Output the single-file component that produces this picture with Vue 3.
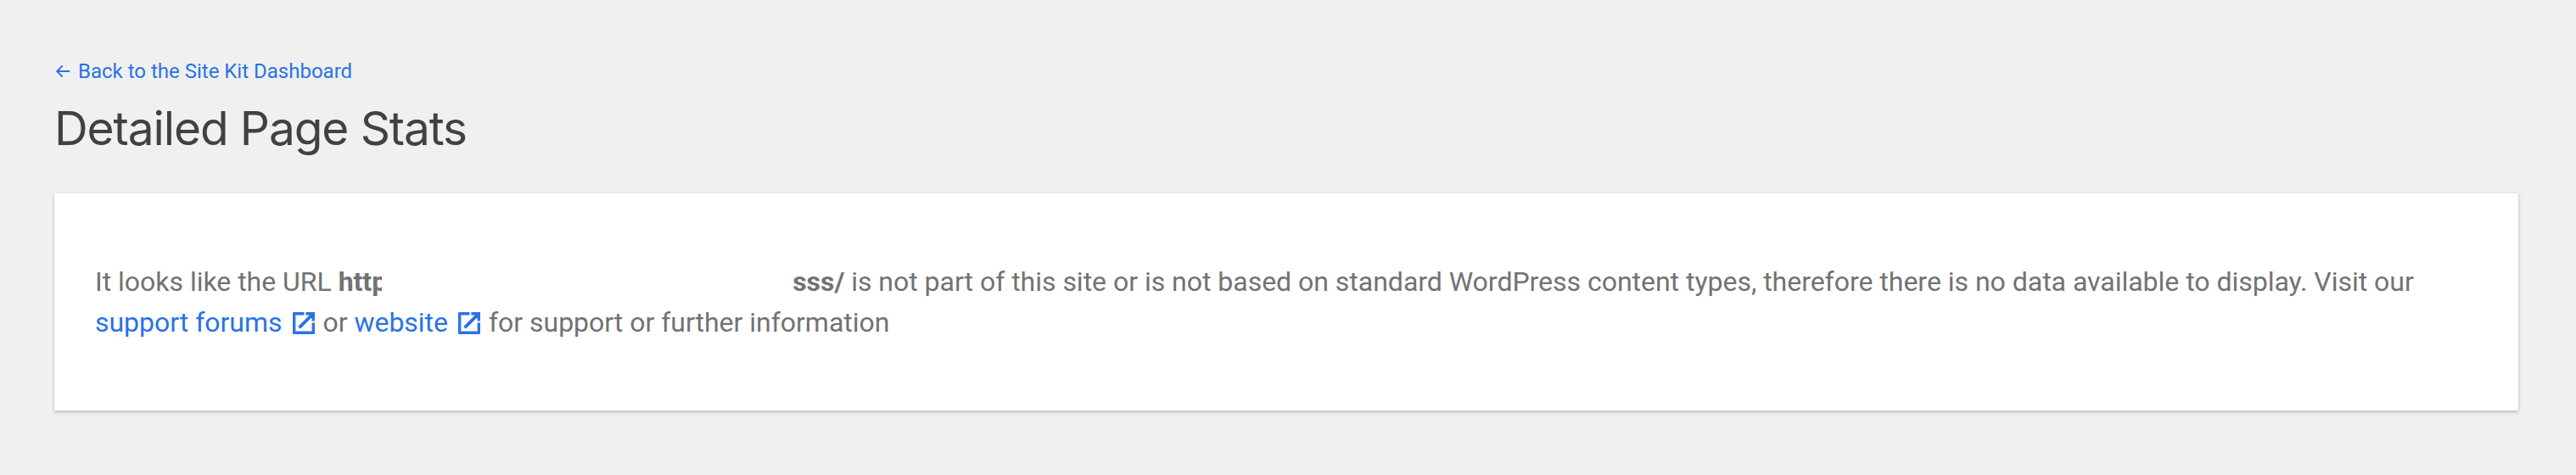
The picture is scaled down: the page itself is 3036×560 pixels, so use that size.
<script setup>
const backLabel = 'Back to the Site Kit Dashboard'
const title = 'Detailed Page Stats'
const iconFrame = 'M19 19H5V5h7V3H5c-1.11 0-2 .9-2 2v14c0 1.100.89 2 2 2h14c1.100 0 2-.9 2-2v-7h-2v7zM14 3v2h3.590l-9.830 9.830 1.410 1.410L19 6.410V10h2V3h-7z'
</script>

<template>
  <main class="page">
    <a class="back" href="#">
      <svg class="back-icon" viewBox="0 0 16 16" aria-hidden="true">
        <path d="M14.5 8H2.500M7.800 2.700 2.500 8l5.300 5.300" />
      </svg>
      <span>{{ backLabel }}</span>
    </a>
    <h1 class="title">{{ title }}</h1>
    <section class="card">
      <p class="message">
        It looks like the URL <strong>http<span class="mask"></span>sss/</strong> is not part of this site or is not based on standard WordPress content types, therefore there is no data available to display. Visit our
        <a class="link" href="#">support forums<svg class="ext" viewBox="3 3 18 18" aria-hidden="true"><path :d="iconFrame" /></svg></a>
        or
        <a class="link" href="#">website<svg class="ext" viewBox="3 3 18 18" aria-hidden="true"><path :d="iconFrame" /></svg></a>
        for support or further information
      </p>
    </section>
  </main>
</template>

<style>
html, body {
  margin: 0;
  background: #f0f0f0;
}
</style>

<style scoped>
.page {
  box-sizing: border-box;
  width: 3036px;
  height: 560px;
  padding: 68px 68px 0 64px;
  background: #f0f0f0;
  font-family: Roboto, "Liberation Sans", sans-serif;
}
.back {
  display: flex;
  align-items: center;
  gap: 8px;
  height: 32px;
  color: #2a73e4;
  font-size: 24px;
  line-height: 32px;
  text-decoration: none;
}
.back-icon {
  width: 20px;
  height: 20px;
  fill: none;
  stroke: #2a73e4;
  stroke-width: 1.5;
}
.title {
  margin: 15px 0 0;
  color: #3f4144;
  font-family: Inter, Roboto, sans-serif;
  font-size: 55px;
  font-weight: 400;
  letter-spacing: -1.1px;
  line-height: 72px;
}
.card {
  box-sizing: border-box;
  height: 256px;
  margin-top: 41px;
  padding: 80px 48px 0;
  background: #fff;
  box-shadow: 0 2px 4px rgba(0, 0, 0, 0.2), 0 0 4px rgba(0, 0, 0, 0.06);
}
.message {
  margin: 0;
  color: #727272;
  font-size: 32px;
  letter-spacing: -0.02px;
  line-height: 48px;
}
.message strong {
  font-weight: 700;
}
.mask {
  display: inline-block;
  position: relative;
  width: 480px;
  height: 44px;
  margin-left: -6px;
  margin-right: 4px;
  background: #fff;
  vertical-align: -12px;
}
.link {
  color: #2a73e4;
  text-decoration: none;
}
.ext {
  width: 26px;
  height: 26px;
  margin-left: 12px;
  margin-right: 2px;
  vertical-align: -3px;
  fill: #2a73e4;
  stroke: #2a73e4;
  stroke-width: 0.7;
}
</style>
